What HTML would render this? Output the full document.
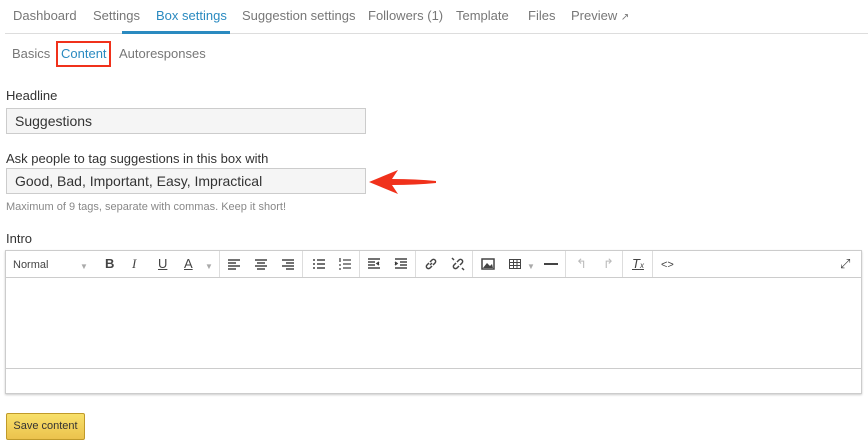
<!DOCTYPE html>
<html><head><style>
*{box-sizing:border-box;margin:0;padding:0}
body{width:868px;height:446px;background:#fff;font-family:"Liberation Sans",sans-serif;font-size:13px;color:#333;position:relative;overflow:hidden}
.a{position:absolute;white-space:nowrap}
.tab{color:#777;top:8px}
.sub{color:#777;top:46px}
.inp{position:absolute;left:6px;width:360px;height:26px;background:#f5f5f5;border:1px solid #ccc;font-size:14px;padding:4px 8px;color:#333}
.ic{position:absolute;top:257px;color:#444;font-size:13px;line-height:14px}
.sv{position:absolute;top:257px}
.sep{position:absolute;top:251px;width:1px;height:26px;background:#ddd}
</style></head><body>
<div class="a tab" style="left:13px">Dashboard</div>
<div class="a tab" style="left:93px">Settings</div>
<div class="a tab" style="left:156px;color:#2a8ac0">Box settings</div>
<div class="a tab" style="left:242px">Suggestion settings</div>
<div class="a tab" style="left:368px">Followers (1)</div>
<div class="a tab" style="left:456px">Template</div>
<div class="a tab" style="left:528px">Files</div>
<div class="a tab" style="left:571px">Preview <span style="font-size:10px">&#x2197;</span></div>
<div class="a" style="left:5px;top:33px;width:863px;height:1px;background:#ddd"></div>
<div class="a" style="left:122px;top:31px;width:108px;height:3px;background:#2a8ac0"></div>
<div class="a sub" style="left:12px">Basics</div>
<div class="a" style="left:56px;top:41px;width:55px;height:26px;border:2px solid #f0311b"></div>
<div class="a sub" style="left:61px;color:#2a8ac0">Content</div>
<div class="a sub" style="left:119px">Autoresponses</div>
<div class="a" style="left:6px;top:88px">Headline</div>
<div class="inp" style="top:108px">Suggestions</div>
<div class="a" style="left:6px;top:151px">Ask people to tag suggestions in this box with</div>
<div class="inp" style="top:168px">Good, Bad, Important, Easy, Impractical</div>
<svg class="a" style="left:366px;top:168px" width="74" height="28"><path d="M3 14 L32 2 L26 11 Q50 11 70 13 L70 15 Q50 17 26 17 L32 26 Z" fill="#f0311b"/></svg>
<div class="a" style="left:6px;top:201px;font-size:11px;color:#888">Maximum of 9 tags, separate with commas. Keep it short!</div>
<div class="a" style="left:6px;top:231px">Intro</div>
<div class="a" style="left:5px;top:250px;width:857px;height:144px;border:1px solid #ccc;box-shadow:0 1px 2px #ccc"></div>
<div class="a" style="left:5px;top:277px;width:857px;height:1px;background:#ccc"></div>
<div class="a" style="left:5px;top:368px;width:857px;height:1px;background:#ccc"></div>
<div class="ic" style="left:13px;font-size:11px;top:258px">Normal</div>
<div class="ic" style="left:80px;color:#aaa;font-size:8px;top:260px">▼</div>
<div class="ic" style="left:105px;font-weight:bold">B</div>
<div class="ic" style="left:132px;font-style:italic;font-family:'Liberation Serif'">I</div>
<div class="ic" style="left:158px;text-decoration:underline">U</div>
<div class="ic" style="left:184px;text-decoration:underline">A</div>
<div class="ic" style="left:205px;color:#aaa;font-size:8px;top:260px">▼</div>
<div class="sep" style="left:219px"></div>
<svg class="sv" style="left:227px" width="14" height="14" stroke="#444" stroke-width="1.5"><path d="M1 3h12M1 6h8M1 9h12M1 12h8"/></svg>
<svg class="sv" style="left:254px" width="14" height="14" stroke="#444" stroke-width="1.5"><path d="M1 3h12M3 6h8M1 9h12M3 12h8"/></svg>
<svg class="sv" style="left:281px" width="14" height="14" stroke="#444" stroke-width="1.5"><path d="M1 3h12M5 6h8M1 9h12M5 12h8"/></svg>
<div class="sep" style="left:302px"></div>
<svg class="sv" style="left:312px" width="14" height="14" stroke="#444" stroke-width="1.5"><path d="M1 3h2M5 3h8M1 7h2M5 7h8M1 11h2M5 11h8"/></svg>
<svg class="sv" style="left:338px" width="14" height="14" stroke="#444" stroke-width="1.3"><path d="M2 1v4M1 8h2M1 12h2M5 3h8M5 7h8M5 11h8"/></svg>
<div class="sep" style="left:359px"></div>
<svg class="sv" style="left:367px" width="14" height="14" stroke="#444" stroke-width="1.5"><path d="M1 2h12M1 5h7M1 8h7M1 11h12M12 5l-2 1.5 2 1.5"/></svg>
<svg class="sv" style="left:394px" width="14" height="14" stroke="#444" stroke-width="1.5"><path d="M1 2h12M6 5h7M6 8h7M1 11h12M1 5l2 1.5-2 1.5"/></svg>
<div class="sep" style="left:415px"></div>
<svg class="sv" style="left:424px" width="14" height="14" stroke="#444" stroke-width="1.5" fill="none"><path d="M6 8l2-2M5 6l-2 2a2 2 0 0 0 3 3l2-2M9 8l2-2a2 2 0 0 0-3-3L6 5"/></svg>
<svg class="sv" style="left:451px" width="14" height="14" stroke="#444" stroke-width="1.5" fill="none"><path d="M5 6l-2 2a2 2 0 0 0 3 3l2-2M9 8l2-2a2 2 0 0 0-3-3L6 5M1 1l2 2M11 11l2 2"/></svg>
<div class="sep" style="left:472px"></div>
<svg class="sv" style="left:481px" width="14" height="14"><rect x="1" y="2" width="12" height="10" fill="none" stroke="#444" stroke-width="1.5"/><path d="M2 11l4-5 3 3 2-2 1 4z" fill="#444"/></svg>
<svg class="sv" style="left:508px" width="14" height="14" stroke="#444" fill="none"><rect x="1.5" y="2.5" width="11" height="9"/><path d="M1.5 5.5h11M1.5 8.5h11M5.5 2.5v9M9 2.5v9"/></svg>
<div class="ic" style="left:527px;color:#aaa;font-size:8px;top:260px">▼</div>
<div class="a" style="left:544px;top:263px;width:14px;height:2px;background:#444"></div>
<div class="sep" style="left:565px"></div>
<div class="ic" style="left:576px;color:#bbb">↰</div><div class="ic" style="left:603px;color:#bbb">↱</div>
<div class="sep" style="left:622px"></div>
<div class="ic" style="left:632px;font-style:italic;text-decoration:underline">T<span style="font-size:8px">x</span></div>
<div class="sep" style="left:652px"></div>
<div class="ic" style="left:661px;font-size:11px;top:258px">&lt;&gt;</div>
<div class="ic" style="left:840px">⤢</div>
<div class="a" style="left:6px;top:413px;width:79px;height:27px;background:linear-gradient(#f8e06a,#ebc24d);border:1px solid #c09a2a;border-radius:2px;font-size:11px;text-align:center;line-height:25px;color:#333">Save content</div>
</body></html>
